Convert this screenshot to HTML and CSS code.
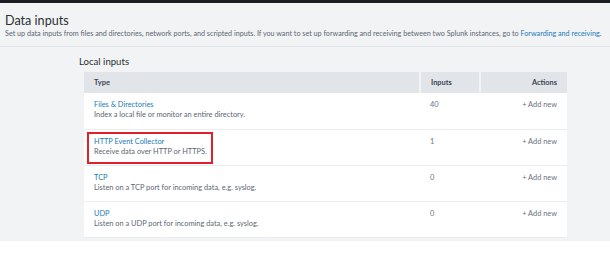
FILE: index.html
```html
<!DOCTYPE html>
<html lang="en">
<head>
    <meta charset="UTF-8">
    <title>Data inputs</title>
    <link rel="stylesheet" href="styles.css">
</head>
<body>
    <div class="topbar"></div>

    <div class="page">
        <div class="page-header">
            <h1>Data inputs</h1>
            <p class="intro">Set up data inputs from files and directories, network ports, and scripted inputs. If you want to set up forwarding and receiving between two Splunk instances, go to <a href="#">Forwarding and receiving</a>.</p>
        </div>

        <div class="section">
            <h2>Local inputs</h2>
            <table class="inputs-table">
                <tr>
                    <th class="col-type">Type</th>
                    <th class="col-count">Inputs</th>
                    <th class="col-actions">Actions</th>
                </tr>
                <tr>
                    <td>
                        <a href="#" class="input-name">Files &amp; Directories</a>
                        <div class="input-desc">Index a local file or monitor an entire directory.</div>
                    </td>
                    <td>40</td>
                    <td class="col-actions"><a href="#" class="add-new">+ Add new</a></td>
                </tr>
                <tr>
                    <td>
                        <div class="highlight">
                            <a href="#" class="input-name">HTTP Event Collector</a>
                            <div class="input-desc">Receive data over HTTP or HTTPS.</div>
                        </div>
                    </td>
                    <td>1</td>
                    <td class="col-actions"><a href="#" class="add-new">+ Add new</a></td>
                </tr>
                <tr>
                    <td>
                        <a href="#" class="input-name">TCP</a>
                        <div class="input-desc">Listen on a TCP port for incoming data, e.g. syslog.</div>
                    </td>
                    <td>0</td>
                    <td class="col-actions"><a href="#" class="add-new">+ Add new</a></td>
                </tr>
                <tr>
                    <td>
                        <a href="#" class="input-name">UDP</a>
                        <div class="input-desc">Listen on a UDP port for incoming data, e.g. syslog.</div>
                    </td>
                    <td>0</td>
                    <td class="col-actions"><a href="#" class="add-new">+ Add new</a></td>
                </tr>
            </table>
        </div>
    </div>
</body>
</html>
```

FILE: styles.css
```css
body {
    margin: 0;
    background-color: #ffffff;
    font-family: Lato, "Liberation Sans", sans-serif;
    color: #3c444d;
}

a {
    color: #1a7bb8;
    text-decoration: none;
}

.topbar {
    height: 3px;
    background-color: #1b1e22;
}

.page {
    background-color: #f2f3f5;
    padding-bottom: 3px;
}

.page-header {
    padding: 10px 5px 7px 5px;
    border-bottom: 1px solid #e1e3e6;
}

h1 {
    margin: 0;
    font-size: 12.6px;
    font-weight: 400;
    line-height: 16px;
    color: #2b3033;
}

.intro {
    margin: 0;
    font-size: 7.2px;
    line-height: 10px;
    color: #5c6773;
    white-space: nowrap;
}

.section {
    margin-left: 79px;
    width: 488px;
}

h2 {
    margin: 0;
    padding: 9px 0 4px 0;
    font-size: 9.6px;
    font-weight: 400;
    line-height: 12px;
    color: #2b3033;
}

.inputs-table {
    margin-left: 5px;
    width: 483px;
    border-collapse: collapse;
    font-size: 7.4px;
}

.inputs-table th {
    height: 21px;
    padding: 0 10px;
    background-color: #e1e5ea;
    color: #3c444d;
    font-weight: 700;
    text-align: left;
    border-left: 2px solid #f2f3f5;
}

.inputs-table th:first-child {
    border-left: none;
}

.inputs-table td {
    height: 36px;
    box-sizing: border-box;
    padding: 7px 10px 0 10px;
    vertical-align: top;
    background-color: #ffffff;
    border-bottom: 1px solid #eaecef;
    color: #6b7480;
    line-height: 10px;
}

.col-count {
    width: 38px;
}

.col-actions {
    width: 66px;
    text-align: right !important;
}

.input-name {
    display: block;
    color: #1a7bb8;
}

.input-desc {
    color: #5c6773;
    white-space: nowrap;
}

.add-new {
    color: #6b7480;
}

.highlight {
    margin: -5px 0 0 -7px;
    padding: 3px 5px 5px 5px;
    width: 112px;
    border: 2px solid #e0202b;
}
```
